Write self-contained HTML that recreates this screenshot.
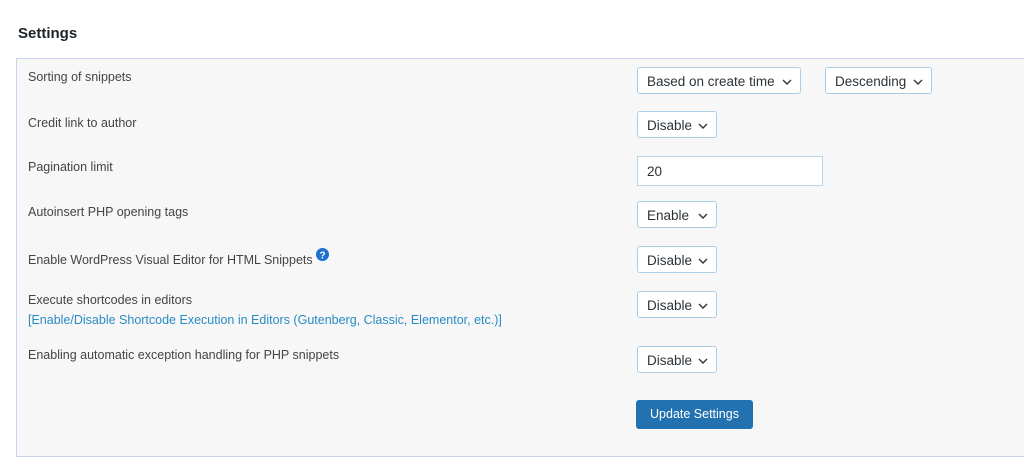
<!DOCTYPE html>
<html><head><style>
body{margin:0;width:1024px;height:457px;background:#fff;font-family:"Liberation Sans",sans-serif;overflow:hidden;position:relative;color:#3c434a}
h2{position:absolute;left:18px;top:25px;margin:0;font-size:15px;font-weight:bold;color:#1d2327}
.panel{position:absolute;left:16px;top:58px;width:1020px;height:397px;background:#f7f7f7;border:1px solid #c9d3ef}
.l{position:absolute;left:28px;font-size:12.5px;color:#444;line-height:16px}
.s{position:absolute;height:27px;background:#fff;border:1px solid #a8cfe6;border-radius:3px;box-sizing:border-box;font-size:13.5px;color:#2c3338;line-height:27px;padding-left:9px}
.s svg{position:absolute;right:8px;top:11px}
.b{position:absolute;left:636px;top:400px;width:117px;height:29px;background:#2271b1;border-radius:3px;color:#fff;font-size:12.5px;line-height:29px;text-align:center}
a{color:#2a8bc4;text-decoration:none}
</style></head><body>
<h2>Settings</h2>
<div class="panel"></div>
<div class="l" style="top:69px">Sorting of snippets</div>
<div class="l" style="top:115px">Credit link to author</div>
<div class="l" style="top:159px">Pagination limit</div>
<div class="l" style="top:204px">Autoinsert PHP opening tags</div>
<div class="l" style="top:248px">Enable WordPress Visual Editor for HTML Snippets <svg width="13" height="13" viewBox="0 0 13 13" style="vertical-align:3px"><circle cx="6.5" cy="6.5" r="6.5" fill="#1e6fd0"/><text x="6.5" y="10.5" font-size="10" font-weight="bold" fill="#fff" text-anchor="middle" font-family="Liberation Sans">?</text></svg></div>
<div class="l" style="top:292px">Execute shortcodes in editors</div>
<div class="l" style="top:312px"><a>[Enable/Disable Shortcode Execution in Editors (Gutenberg, Classic, Elementor, etc.)]</a></div>
<div class="l" style="top:347px">Enabling automatic exception handling for PHP snippets</div>
<div class="s" style="left:637px;top:67px;width:164px">Based on create time<svg width="10" height="6"><path d="M1 1l4 4 4-4" stroke="#333" stroke-width="1.4" fill="none"/></svg></div>
<div class="s" style="left:825px;top:67px;width:107px">Descending<svg width="10" height="6"><path d="M1 1l4 4 4-4" stroke="#333" stroke-width="1.4" fill="none"/></svg></div>
<div class="s" style="left:637px;top:111px;width:80px">Disable<svg width="10" height="6"><path d="M1 1l4 4 4-4" stroke="#333" stroke-width="1.4" fill="none"/></svg></div>
<div class="s" style="left:637px;top:156px;width:186px;height:30px;line-height:30px;border-color:#b9d7ec;border-radius:0">20</div>
<div class="s" style="left:637px;top:201px;width:80px">Enable<svg width="10" height="6"><path d="M1 1l4 4 4-4" stroke="#333" stroke-width="1.4" fill="none"/></svg></div>
<div class="s" style="left:637px;top:246px;width:80px">Disable<svg width="10" height="6"><path d="M1 1l4 4 4-4" stroke="#333" stroke-width="1.4" fill="none"/></svg></div>
<div class="s" style="left:637px;top:291px;width:80px">Disable<svg width="10" height="6"><path d="M1 1l4 4 4-4" stroke="#333" stroke-width="1.4" fill="none"/></svg></div>
<div class="s" style="left:637px;top:346px;width:80px">Disable<svg width="10" height="6"><path d="M1 1l4 4 4-4" stroke="#333" stroke-width="1.4" fill="none"/></svg></div>
<div class="b">Update Settings</div>
</body></html>
